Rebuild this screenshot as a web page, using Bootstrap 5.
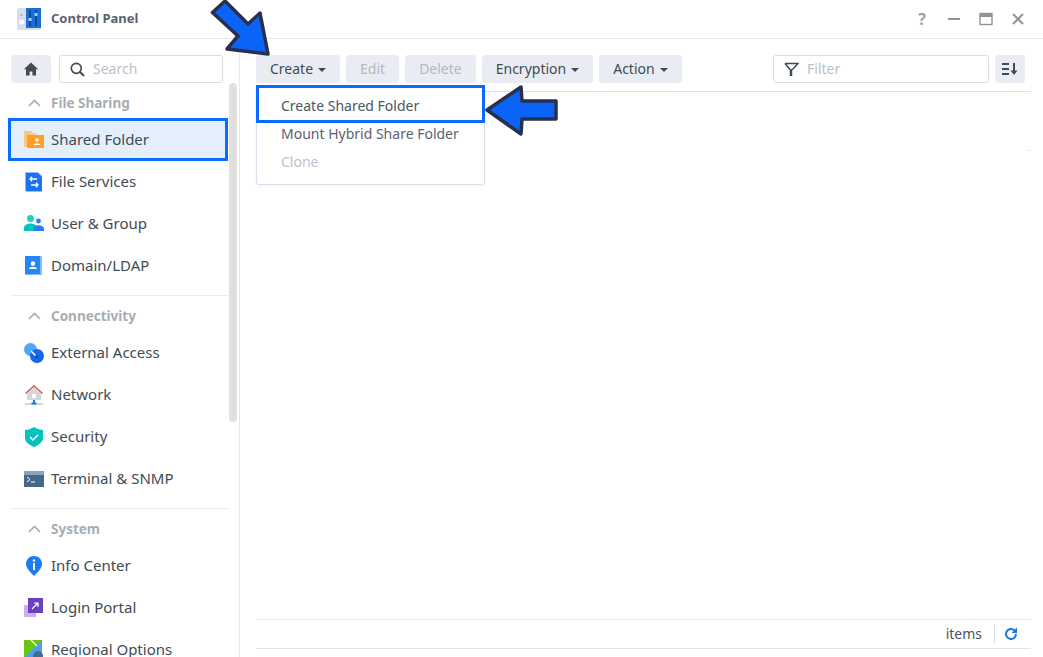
<!DOCTYPE html>
<html lang="en">
<head>
    <meta charset="UTF-8">
    <meta name="viewport" content="width=device-width, initial-scale=1.0">
    <title>Control Panel</title>
    <link href="https://cdn.jsdelivr.net/npm/bootstrap@5.3.0/dist/css/bootstrap.min.css" rel="stylesheet">
    <style>
        html, body { height: 100%; overflow: hidden; }
        body { font-family: "Noto Sans", "Open Sans", sans-serif; font-size: 15px; color: #414b55; background: #fff; position: relative; }

        .title-bar { height: 39px; border-bottom: 1px solid #e3e9ef; padding: 0 17px; }
        .title-text { font-size: 13px; font-weight: 700; color: #59636f; margin-left: 10px; }
        .win-btn { width: 16px; height: 16px; display: block; }
        .help-mark { width: 16px; text-align: center; font-size: 16px; line-height: 20px; font-weight: 700; color: #9a9fa6; }

        .work-area { min-height: 0; flex-basis: 0; }
        .side-pane { width: 240px; flex: none; border-right: 1px solid #e3e9ef; position: relative; overflow: hidden; padding: 16px 11px 0 0; }
        .side-top { padding-left: 11px; margin-bottom: 8px; gap: 8px; }
        .home-btn { width: 40px; height: 28px; padding: 0; background: #e9edf3; border: 0; border-radius: 3px; display: flex; align-items: center; justify-content: center; }
        .search-box { width: 164px; height: 28px; border: 1px solid #d5dee7; border-radius: 3px; padding-left: 10px; gap: 8px; color: #b9c0c8; font-size: 14px; }
        .search-box span, .filter-box span, .foot-row > span:first-child { margin-top: -2px; }
        .side-scroll { position: absolute; left: 229px; top: 44px; width: 8px; height: 339px; background: #e0e0e0; border-radius: 4px; }

        .group-head { height: 24px; margin-left: 28px; margin-bottom: 4px; gap: 10px; font-size: 13.5px; font-weight: 700; color: #a6adb6; }
        .side-item { height: 42px; padding: 0 0 0 24px; width: 220px; gap: 7px; color: #414b55; text-decoration: none; }
        .side-item span { margin-top: -2px; }
        .side-item.is-active { height: 43px; margin: -1px 0 0 8px; padding-left: 13px; background: #e3f0fc; border: 3px solid #0a6cff; }
        .side-item.is-active span { margin-top: 0; }
        .side-rule { margin: 8px 0 8px 11px; width: 217px; border-top: 1px solid #e6ebf1; opacity: 1; }
        .side-icon { width: 20px; height: 20px; flex: none; }

        .main-pane { padding: 16px 12px 0 16px; position: relative; min-width: 0; }
        .tool-row { height: 37px; border-bottom: 1px solid #dbe3ea; padding-bottom: 8px; gap: 6px; }
        .tool-btn { height: 28px; padding: 0 14px; font-size: 14px; line-height: 28px; background: #e9edf3; border: 0; border-radius: 3px; color: #414b55; }
        .tool-btn:disabled { background: #e9edf3; color: #b2b9c2; opacity: 1; }
        .tool-btn.dropdown-toggle::after { border-top-width: 4px; border-left-width: 4px; border-right-width: 4px; margin-left: 5px; vertical-align: 2px; }
        .filter-box { width: 216px; height: 28px; border: 1px solid #d5dee7; border-radius: 3px; padding-left: 10px; gap: 8px; color: #b9c0c8; font-size: 14px; margin-left: auto; }
        .sort-btn { width: 30px; height: 28px; background: #e9edf3; border: 0; border-radius: 3px; padding: 0; margin-right: 6px; display: flex; align-items: center; justify-content: center; }

        .create-menu { position: absolute; left: 16px; top: 46px; width: 229px; height: 100px; margin: 0; padding: 0; border: 1px solid #d7e2ec; border-radius: 3px; box-shadow: 0 1px 3px rgba(0, 0, 0, .06); font-size: 14px; }
        .create-menu .dropdown-item { height: 28px; line-height: 28px; padding: 0 0 0 24px; color: #5a636d; }
        .create-menu .dropdown-item.disabled { color: #bcc2c9; }
        .create-menu .menu-picked { height: 38px; line-height: 36px; margin: -1px -1px -3px -1px; width: 229px; background: #fff; border: 3px solid #0a6cff; padding-left: 22px; color: #4d5660; position: relative; z-index: 1; }
        .row-tick { position: absolute; right: 12px; top: 111px; width: 4px; height: 1px; background: #e3e9ef; }

        .foot-row { height: 30px; border-top: 1px solid #e8ecf0; border-bottom: 1px solid #d9e4ee; margin-top: auto; margin-bottom: 8px; gap: 12px; font-size: 14px; color: #4d5660; padding-right: 13px; }
        .foot-sep { width: 1px; height: 20px; background: #dbe3ea; }
        .foot-refresh { margin-left: -3px; }

        .guide-arrow { position: absolute; overflow: visible; pointer-events: none; }
    </style>
</head>
<body>
<div class="d-flex flex-column vh-100">
    <!-- Title bar -->
    <div class="title-bar d-flex align-items-center flex-shrink-0">
        <svg width="24" height="24" viewBox="0 0 24 24">
            <rect x="0" y="1" width="24" height="22" rx="2" fill="#d9dde8"/>
            <rect x="9" y="1" width="15" height="20" fill="#1a6fd6"/>
            <path d="M13 3v16M19 3v16" stroke="#0b3a78" stroke-width="1.4"/>
            <rect x="11.5" y="11" width="3" height="3" fill="#9fd0ff"/>
            <rect x="17.5" y="6" width="3" height="3" fill="#9fd0ff"/>
            <circle cx="4.5" cy="15" r="2.5" fill="#fff"/>
            <circle cx="4.5" cy="8" r="1" fill="#9aa3b2"/>
        </svg>
        <span class="title-text">Control Panel</span>
        <div class="d-flex align-items-center ms-auto">
            <span class="help-mark">?</span>
            <svg class="win-btn ms-3" viewBox="0 0 16 16"><rect x="2" y="7" width="12" height="2" fill="#8f949b"/></svg>
            <svg class="win-btn ms-3" viewBox="0 0 16 16"><rect x="2" y="2.5" width="12" height="11" fill="none" stroke="#8f949b" stroke-width="1.4"/><rect x="2" y="2.5" width="12" height="3.5" fill="#8f949b"/></svg>
            <svg class="win-btn ms-3" viewBox="0 0 16 16"><path d="M3 3l10 10M13 3L3 13" stroke="#8f949b" stroke-width="2"/></svg>
        </div>
    </div>

    <div class="work-area d-flex flex-grow-1 overflow-hidden">
        <!-- Sidebar -->
        <aside class="side-pane">
            <div class="side-top d-flex">
                <button class="home-btn" type="button" aria-label="Home">
                    <svg width="16" height="16" viewBox="0 0 16 16"><path d="M8 1.5L.8 8.2h2.2V14.5h3.6v-4h2.8v4H13V8.2h2.2z" fill="#414b55"/></svg>
                </button>
                <div class="search-box d-flex align-items-center">
                    <svg width="15" height="15" viewBox="0 0 15 15"><circle cx="6.3" cy="6.3" r="5" fill="none" stroke="#414b55" stroke-width="1.7"/><path d="M10 10l4 4" stroke="#414b55" stroke-width="1.9"/></svg>
                    <span>Search</span>
                </div>
            </div>
            <div class="side-scroll"></div>

            <div class="group-head d-flex align-items-center">
                <svg width="13" height="8" viewBox="0 0 13 8"><path d="M1 7l5.5-5.5L12 7" fill="none" stroke="#a6adb6" stroke-width="1.6"/></svg>
                <span>File Sharing</span>
            </div>
            <a class="side-item is-active d-flex align-items-center" href="#">
                <svg class="side-icon" viewBox="0 0 20 20"><path d="M0 1h7l2 2h3v14H0z" fill="#fbc987"/><path d="M3 5h17v13H3z" fill="#ff9f24"/><circle cx="13" cy="10" r="1.8" fill="#fff"/><path d="M9.5 15c0-2 7-2 7 0z" fill="#fff"/></svg>
                <span>Shared Folder</span>
            </a>
            <a class="side-item d-flex align-items-center" href="#">
                <svg class="side-icon" viewBox="0 0 20 20"><path d="M1 0h13l4 4v16H3l-2-1z" fill="#8fbcff"/><path d="M2 1h12l4 4v14H2z" fill="#1b73f2"/><path d="M13 7H6M8 4.8L6 7l2 2.2M7 13h7M12 10.8l2 2.2-2 2.2" fill="none" stroke="#fff" stroke-width="1.3"/></svg>
                <span>File Services</span>
            </a>
            <a class="side-item d-flex align-items-center" href="#">
                <svg class="side-icon" viewBox="0 0 20 20"><circle cx="6.5" cy="4.5" r="3.5" fill="#1fcfc8"/><path d="M0 17v-3c0-6 13-6 13 0v3z" fill="#00c8c0"/><circle cx="14.5" cy="7" r="2.4" fill="#2a7cf7"/><path d="M9 17v-2c0-5 11-5 11 0v2z" fill="#2a7cf7"/></svg>
                <span>User &amp; Group</span>
            </a>
            <a class="side-item d-flex align-items-center" href="#">
                <svg class="side-icon" viewBox="0 0 20 20"><rect x="1" y="0" width="17" height="19" fill="#2586f5"/><path d="M16 0h2v19H1v-1h15z" fill="#7fbcfb"/><circle cx="9" cy="7.5" r="2.2" fill="#fff"/><path d="M5 13c0-3 8-3 8 0z" fill="#fff"/></svg>
                <span>Domain/LDAP</span>
            </a>
            <hr class="side-rule">

            <div class="group-head d-flex align-items-center">
                <svg width="13" height="8" viewBox="0 0 13 8"><path d="M1 7l5.5-5.5L12 7" fill="none" stroke="#a6adb6" stroke-width="1.6"/></svg>
                <span>Connectivity</span>
            </div>
            <a class="side-item d-flex align-items-center" href="#">
                <svg class="side-icon" viewBox="0 0 20 20"><circle cx="6.5" cy="6.5" r="6.5" fill="#4aa8ff"/><circle cx="13" cy="13" r="7" fill="#1668e8"/><path d="M7 8l6 6" stroke="#fff" stroke-width="1.5"/><circle cx="12.5" cy="13.5" r="1.5" fill="#0b3f9c"/></svg>
                <span>External Access</span>
            </a>
            <a class="side-item d-flex align-items-center" href="#">
                <svg class="side-icon" viewBox="0 0 20 20"><path d="M10 0L1 8l1 1 8-7 8 7 1-1z" fill="#d9534f"/><path d="M3 8.5L10 2.5l7 6V15H3z" fill="#d3d7dc"/><rect x="8" y="9" width="4" height="4" fill="#fff"/><path d="M1 19h18" stroke="#b8bfc7" stroke-width="1.2"/><path d="M10 15v3" stroke="#1b73f2" stroke-width="2"/><rect x="7.5" y="17.5" width="5" height="2" fill="#1b73f2"/></svg>
                <span>Network</span>
            </a>
            <a class="side-item d-flex align-items-center" href="#">
                <svg class="side-icon" viewBox="0 0 20 20"><path d="M10 0c3 2 6 3 9 3v8c0 4-4 7-9 9-5-2-9-5-9-9V3c3 0 6-1 9-3z" fill="#03c4bd"/><path d="M6 10l3 3 5-5" fill="none" stroke="#fff" stroke-width="1.4"/></svg>
                <span>Security</span>
            </a>
            <a class="side-item d-flex align-items-center" href="#">
                <svg class="side-icon" viewBox="0 0 20 20"><rect x="0" y="2" width="20" height="16" fill="#44688c"/><rect x="0" y="2" width="20" height="4" fill="#8aa3ba"/><path d="M3 8l3 2.5L3 13" fill="none" stroke="#fff" stroke-width="1"/><path d="M7 13h4" stroke="#fff"/></svg>
                <span>Terminal &amp; SNMP</span>
            </a>
            <hr class="side-rule">

            <div class="group-head d-flex align-items-center">
                <svg width="13" height="8" viewBox="0 0 13 8"><path d="M1 7l5.5-5.5L12 7" fill="none" stroke="#a6adb6" stroke-width="1.6"/></svg>
                <span>System</span>
            </div>
            <a class="side-item d-flex align-items-center" href="#">
                <svg class="side-icon" viewBox="0 0 20 20"><path d="M10 0c4.500 0 8 3.500 8 8 0 4-4 8-8 12-4-4-8-8-8-12 0-4.500 3.500-8 8-8z" fill="#1b7bf5"/><rect x="9" y="7" width="2" height="7" fill="#fff"/><circle cx="10" cy="4.500" r="1.300" fill="#fff"/></svg>
                <span>Info Center</span>
            </a>
            <a class="side-item d-flex align-items-center" href="#">
                <svg class="side-icon" viewBox="0 0 20 20"><rect x="0" y="7" width="12" height="12" fill="#cdaef0"/><rect x="4" y="0" width="15" height="15" fill="#6a3fc0"/><path d="M8 11l6-6M10 5h4v4" fill="none" stroke="#fff" stroke-width="1.200"/></svg>
                <span>Login Portal</span>
            </a>
            <a class="side-item d-flex align-items-center" href="#">
                <svg class="side-icon" viewBox="0 0 20 20"><rect width="18" height="18" fill="#6cc417"/><path d="M18 0L0 18h18z" fill="#4a9ff0"/><path d="M7 0l6 6" stroke="#fff" stroke-width="1.200"/><circle cx="14" cy="16" r="5" fill="#4a6c8c"/></svg>
                <span>Regional Options</span>
            </a>
        </aside>

        <!-- Main area -->
        <main class="main-pane flex-grow-1 d-flex flex-column">
            <div class="tool-row d-flex flex-shrink-0">
                <button class="btn tool-btn dropdown-toggle" type="button">Create</button>
                <button class="btn tool-btn" type="button" disabled>Edit</button>
                <button class="btn tool-btn" type="button" disabled>Delete</button>
                <button class="btn tool-btn dropdown-toggle" type="button">Encryption</button>
                <button class="btn tool-btn dropdown-toggle" type="button">Action</button>
                <div class="filter-box d-flex align-items-center">
                    <svg width="15" height="15" viewBox="0 0 15 15"><path d="M1 1.500h13L9 7l-1.500 1V14M6.500 14V8L1 1.500" fill="none" stroke="#414b55" stroke-width="1.500"/></svg>
                    <span>Filter</span>
                </div>
                <button class="sort-btn" type="button" aria-label="Sort">
                    <svg width="16" height="14" viewBox="0 0 16 14"><path d="M0 2h7M0 7h7M0 12h7" stroke="#414b55" stroke-width="2"/><path d="M12 1v9" stroke="#414b55" stroke-width="2"/><path d="M8.500 8.500h7L12 13z" fill="#414b55"/></svg>
                </button>
            </div>

            <ul class="dropdown-menu show create-menu">
                <li><a class="dropdown-item menu-picked" href="#">Create Shared Folder</a></li>
                <li><a class="dropdown-item" href="#">Mount Hybrid Share Folder</a></li>
                <li><a class="dropdown-item disabled" href="#">Clone</a></li>
            </ul>
            <div class="row-tick"></div>

            <div class="foot-row d-flex align-items-center justify-content-end flex-shrink-0">
                <span>items</span>
                <span class="foot-sep"></span>
                <svg class="foot-refresh" width="14" height="14" viewBox="0 0 14 14"><path d="M12 7a5 5 0 1 1-1.500-3.600" fill="none" stroke="#1677e8" stroke-width="2"/><path d="M13 0.500V6H7.500z" fill="#1677e8"/></svg>
            </div>
        </main>
    </div>
</div>

<!-- Guide arrows over the page -->
<svg class="guide-arrow top-0 start-0" width="1043" height="657" viewBox="0 0 1043 657">
    <path d="M212.500 12.500L225 1L248 24L260 13L268 54L227 49L238 36Z" fill="#0a64f8" stroke="#27304e" stroke-width="3.500" stroke-linejoin="round"/>
    <path d="M487 110L521 87L522 101L556 101L556 119L522 119L521 134Z" fill="#0a64f8" stroke="#27304e" stroke-width="3.500" stroke-linejoin="round"/>
</svg>

<script src="https://cdn.jsdelivr.net/npm/bootstrap@5.3.0/dist/js/bootstrap.bundle.min.js"></script>
</body>
</html>
